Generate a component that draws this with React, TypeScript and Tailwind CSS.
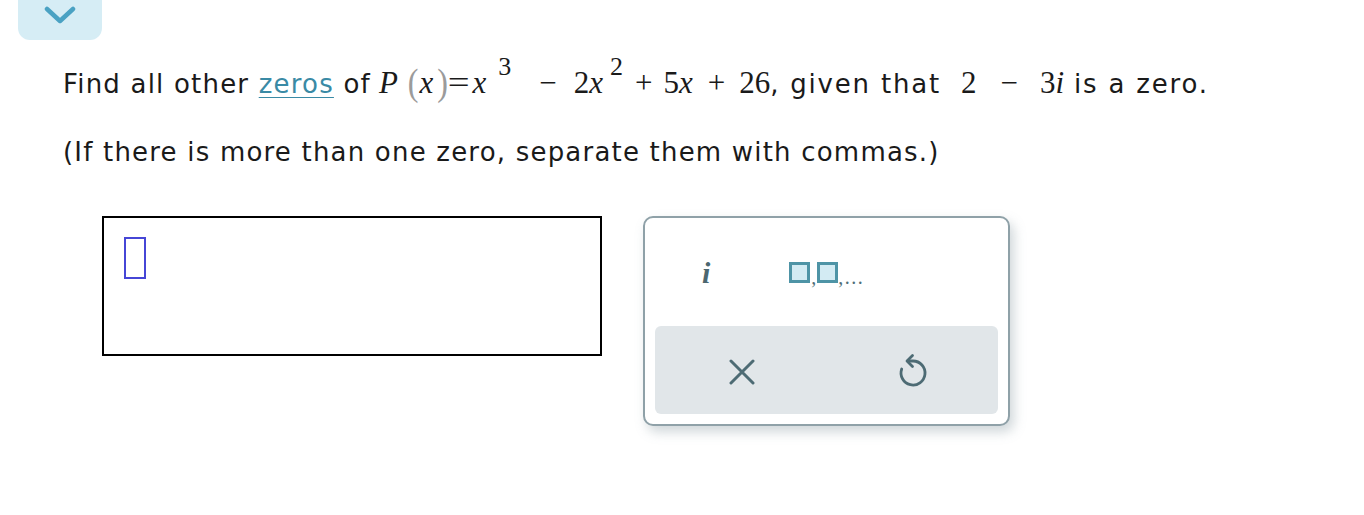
const sans = { fontFamily: '"DejaVu Sans", Verdana, sans-serif' };
const serif = { fontFamily: '"Liberation Serif", "Times New Roman", serif' };

function T({ children, i, ml, className }: { children: React.ReactNode; i?: boolean; ml: string; className?: string }) {
  return (
    <span className={`${ml} ${i ? 'italic' : ''} ${className ?? ''}`} style={serif}>
      {children}
    </span>
  );
}

function Paren({ children, ml }: { children: React.ReactNode; ml: string }) {
  return (
    <span className={`${ml} inline-block scale-y-[1.2] text-[32px] text-[#9b9b9b]`} style={serif}>
      {children}
    </span>
  );
}

function Sup({ children, ml }: { children: React.ReactNode; ml: string }) {
  return (
    <span className={`${ml} relative -top-[18px] text-[26px]`} style={serif}>
      {children}
    </span>
  );
}

function CloseIcon() {
  return (
    <svg width="26" height="26" viewBox="0 0 26 26" fill="none" stroke="currentColor" strokeWidth="3" strokeLinecap="round">
      <path d="M2 2 L24 24 M24 2 L2 24" />
    </svg>
  );
}

function UndoIcon() {
  return (
    <svg width="30" height="38" viewBox="0 0 30 38" fill="none" stroke="currentColor" strokeWidth="2.8" strokeLinecap="round" strokeLinejoin="round">
      <path d="M10 11 H15 A12 12 0 1 1 3.7 19" />
      <path d="M14.5 5.5 L9 11 L14.5 16.5" />
    </svg>
  );
}

export default function App() {
  return (
    <div className="min-h-screen w-full bg-white text-[#1a1a1a]" style={sans}>
      <div className="ml-[18px] flex h-[40px] w-[84px] items-center justify-center rounded-b-[12px] bg-[#d6edf5]">
        <svg width="32" height="20" viewBox="0 0 32 20" className="-mt-[10px]">
          <path d="M3 4 L16 16 L29 4" fill="none" stroke="#4aa2c3" strokeWidth="4.5" strokeLinecap="round" strokeLinejoin="round" />
        </svg>
      </div>

      <div className="pl-[63px] pt-[16px]">
        <p className="flex h-[50px] items-baseline whitespace-pre pt-[6px] text-[26px] leading-[40px] tracking-[1.2px]">
          <span>Find all other </span>
          <span className="text-[#3a8aa5] underline decoration-1 underline-offset-4">zeros</span>
          <span> of</span>
          <span className="flex items-baseline whitespace-pre text-[31px] tracking-normal">
            <T i ml="ml-[8px]">P</T>
            <Paren ml="ml-[10px]">(</Paren>
            <T i ml="ml-[1px]">x</T>
            <Paren ml="ml-[4px]">)</Paren>
            <T ml="ml-[2px]" className="inline-block scale-x-[1.25]">=</T>
            <T i ml="ml-[5px]">x</T>
            <Sup ml="ml-[12px]">3</Sup>
            <T ml="ml-[28px]">−</T>
            <T ml="ml-[17px]">2</T>
            <T i ml="ml-0">x</T>
            <Sup ml="ml-[7px]">2</Sup>
            <T ml="ml-[12px]">+</T>
            <T ml="ml-[11px]">5</T>
            <T i ml="ml-0">x</T>
            <T ml="ml-[15px]">+</T>
            <T ml="ml-[14px]">26</T>
          </span>
          <span className="tracking-[1.8px]">, given that</span>
          <span className="flex items-baseline whitespace-pre text-[31px] tracking-normal">
            <T ml="ml-[20px]">2</T>
            <T ml="ml-[24px]">−</T>
            <T ml="ml-[22px]">3</T>
            <T i ml="ml-0">i</T>
          </span>
          <span className="tracking-[1.8px]"> is a zero.</span>
        </p>

        <p className="mt-[26px] text-[26px] leading-[40px] tracking-[1.2px]">
          (If there is more than one zero, separate them with commas.)
        </p>

        <div className="mt-[44px] flex items-start">
          <div className="ml-[39px] h-[140px] w-[500px] border-2 border-black px-[20px] pt-[19px]">
            <div className="h-[42px] w-[22px] border-2 border-[#4646d6]" />
          </div>

          <div className="ml-[41px] flex h-[210px] w-[367px] flex-col rounded-[10px] border-2 border-[#8fa1a8] bg-white px-[10px] pb-[10px] shadow-[4px_6px_12px_rgba(120,140,150,0.35)]">
            <div className="flex h-[108px] items-center">
              <span className="ml-[47px] text-[30px] font-bold italic text-[#4c6770]" style={serif}>
                i
              </span>
              <div className="ml-[79px] flex items-end text-[#4f6e78]">
                <span className="h-[21px] w-[21px] border-[3px] border-[#4e94a6] bg-[#d3ebf3]" />
                <span className="-mb-[4px] px-[1px] text-[20px] leading-none" style={serif}>,</span>
                <span className="h-[21px] w-[21px] border-[3px] border-[#4e94a6] bg-[#d3ebf3]" />
                <span className="-mb-[4px] text-[20px] leading-none tracking-[1.5px]" style={serif}>,...</span>
              </div>
            </div>
            <div className="flex flex-1 items-center rounded-[6px] bg-[#e1e6e9] text-[#4d6b74]">
              <div className="flex flex-1 justify-center pl-[2px] pt-[4px]">
                <CloseIcon />
              </div>
              <div className="flex flex-1 justify-center -mt-[2px] pl-[2px]">
                <UndoIcon />
              </div>
            </div>
          </div>
        </div>
      </div>
    </div>
  );
}
